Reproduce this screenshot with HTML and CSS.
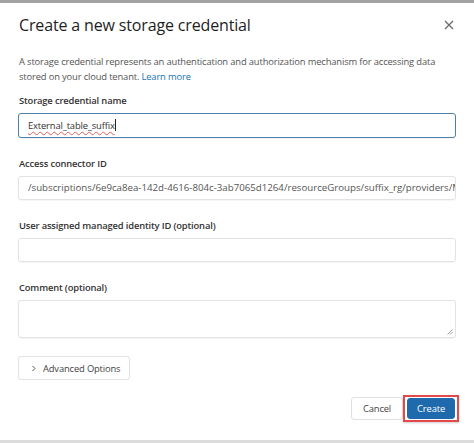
FILE: index.html
```html
<!DOCTYPE html>
<html lang="en">
<head>
  <meta charset="UTF-8" />
  <meta name="viewport" content="width=device-width, initial-scale=1.0"/>
  <title>Create a new storage credential</title>
  <link rel="stylesheet" href="styles.css">
</head>
<body>
  <div class="modal">
    <div class="modal-header">
      <h1 class="modal-title">Create a new storage credential</h1>
      <button class="close-btn" aria-label="Close">
        <svg width="10" height="10" viewBox="0 0 10 10">
          <path d="M1 1 L9 9 M9 1 L1 9" stroke="#6b6b6b" stroke-width="1.3" fill="none"/>
        </svg>
      </button>
    </div>

    <div class="modal-body">
      <p class="intro">
        A storage credential represents an authentication and authorization mechanism for accessing data
        stored on your cloud tenant. <a href="#" class="link">Learn more</a>
      </p>

      <div class="field">
        <label class="field-label">Storage credential name</label>
        <div class="input focused"><span class="typo">External_table_suffix</span><span class="caret"></span></div>
      </div>

      <div class="field">
        <label class="field-label">Access connector ID</label>
        <div class="input wide">/subscriptions/6e9ca8ea-142d-4616-804c-3ab7065d1264/resourceGroups/suffix_rg/providers/Microsoft.Databricks/accessConnectors/suffix_ac</div>
      </div>

      <div class="field">
        <label class="field-label">User assigned managed identity ID (optional)</label>
        <div class="input"></div>
      </div>

      <div class="field">
        <label class="field-label">Comment (optional)</label>
        <div class="input textarea">
          <svg class="grip" width="6" height="6" viewBox="0 0 6 6">
            <path d="M5.5 0.5 L0.5 5.5 M5.5 3 L3 5.5" stroke="#8a8a8a" stroke-width="0.8"/>
          </svg>
        </div>
      </div>

      <button class="adv-btn">
        <svg width="6" height="7" viewBox="0 0 6 7">
          <path d="M1.5 1 L4 3.5 L1.5 6" stroke="#555" stroke-width="1" fill="none"/>
        </svg>
        Advanced Options
      </button>
    </div>

    <div class="modal-footer">
      <button class="btn btn-default">Cancel</button>
      <div class="highlight">
        <button class="btn btn-primary">Create</button>
      </div>
    </div>
  </div>
</body>
</html>
```

FILE: styles.css
```css
html, body {
  margin: 0;
  padding: 0;
  background-color: #ffffff;
  font-family: "Open Sans", "Noto Sans", sans-serif;
  color: #333333;
}

.modal {
  width: 474px;
  height: 443px;
  box-sizing: border-box;
  border-top: 3px solid #a3a3a3;
  border-bottom: 3px solid #dcdcdc;
  display: flex;
  flex-direction: column;
  overflow: hidden;
}

.modal-header {
  display: flex;
  justify-content: space-between;
  align-items: center;
  padding: 7px 20px 0 19px;
  height: 30px;
}

.modal-title {
  margin: 0;
  font-size: 16px;
  font-weight: 400;
  color: #1e1e1e;
  letter-spacing: -0.15px;
}

.close-btn {
  border: none;
  background: none;
  padding: 0;
  display: flex;
}

.modal-body {
  padding: 14px 18px 0 18px;
  display: flex;
  flex-direction: column;
}

.intro {
  margin: 0 0 0 1px;
  font-size: 9.4px;
  line-height: 15px;
  color: #555555;
  letter-spacing: -0.15px;
}

.link {
  color: #2272b4;
  text-decoration: none;
}

.field {
  display: flex;
  flex-direction: column;
  margin-top: 10px;
}

.field + .field {
  margin-top: 19px;
}

.field-label {
  font-size: 9.4px;
  font-weight: 600;
  color: #333333;
  margin: 0 0 5px 1px;
  line-height: 14px;
  letter-spacing: -0.15px;
}

.input {
  height: 24px;
  box-sizing: border-box;
  border: 1px solid #e2e2e2;
  border-radius: 3px;
  padding: 0 9px;
  font-size: 9.4px;
  line-height: 22px;
  color: #555555;
  white-space: nowrap;
  overflow: hidden;
  letter-spacing: -0.15px;
  box-shadow: 0 1px 1px rgba(0, 0, 0, 0.04);
}

.input.wide {
  font-size: 9.7px;
  letter-spacing: 0;
}

.input.focused {
  border: 1px solid #4a7fae;
  height: 25px;
  line-height: 23px;
  color: #333333;
}

.typo {
  text-decoration: underline wavy #e06060;
  text-decoration-thickness: 0.6px;
  text-underline-offset: 2px;
}

.caret {
  display: inline-block;
  width: 1px;
  height: 12px;
  background: #222222;
  vertical-align: -2px;
}

.textarea {
  height: 38px;
  position: relative;
}

.grip {
  position: absolute;
  right: 2px;
  bottom: 2px;
}

.adv-btn {
  align-self: flex-start;
  margin-top: 18px;
  height: 24px;
  padding: 0 9px 0 12px;
  display: flex;
  align-items: center;
  gap: 6px;
  background: #ffffff;
  border: 1px solid #e2e2e2;
  border-radius: 3px;
  font-family: inherit;
  font-size: 9.4px;
  letter-spacing: -0.15px;
  color: #444444;
}

.modal-footer {
  display: flex;
  justify-content: flex-end;
  align-items: center;
  padding: 15px 15px 0 0;
}

.btn {
  font-family: inherit;
  font-size: 9.4px;
  letter-spacing: -0.15px;
  height: 23px;
  border-radius: 3px;
  padding: 0 10px;
}

.btn-default {
  background: #ffffff;
  border: 1px solid #e0e0e0;
  color: #444444;
  padding: 0 11px;
}

.highlight {
  border: 2px solid #e04a4a;
  padding: 1px 2px;
  display: flex;
  box-shadow: 0 1px 2px rgba(0, 0, 0, 0.2);
}

.btn-primary {
  background: #1f6aac;
  border: 1px solid #1f6aac;
  color: #ffffff;
  height: 21px;
  padding: 0 9px;
}
```
